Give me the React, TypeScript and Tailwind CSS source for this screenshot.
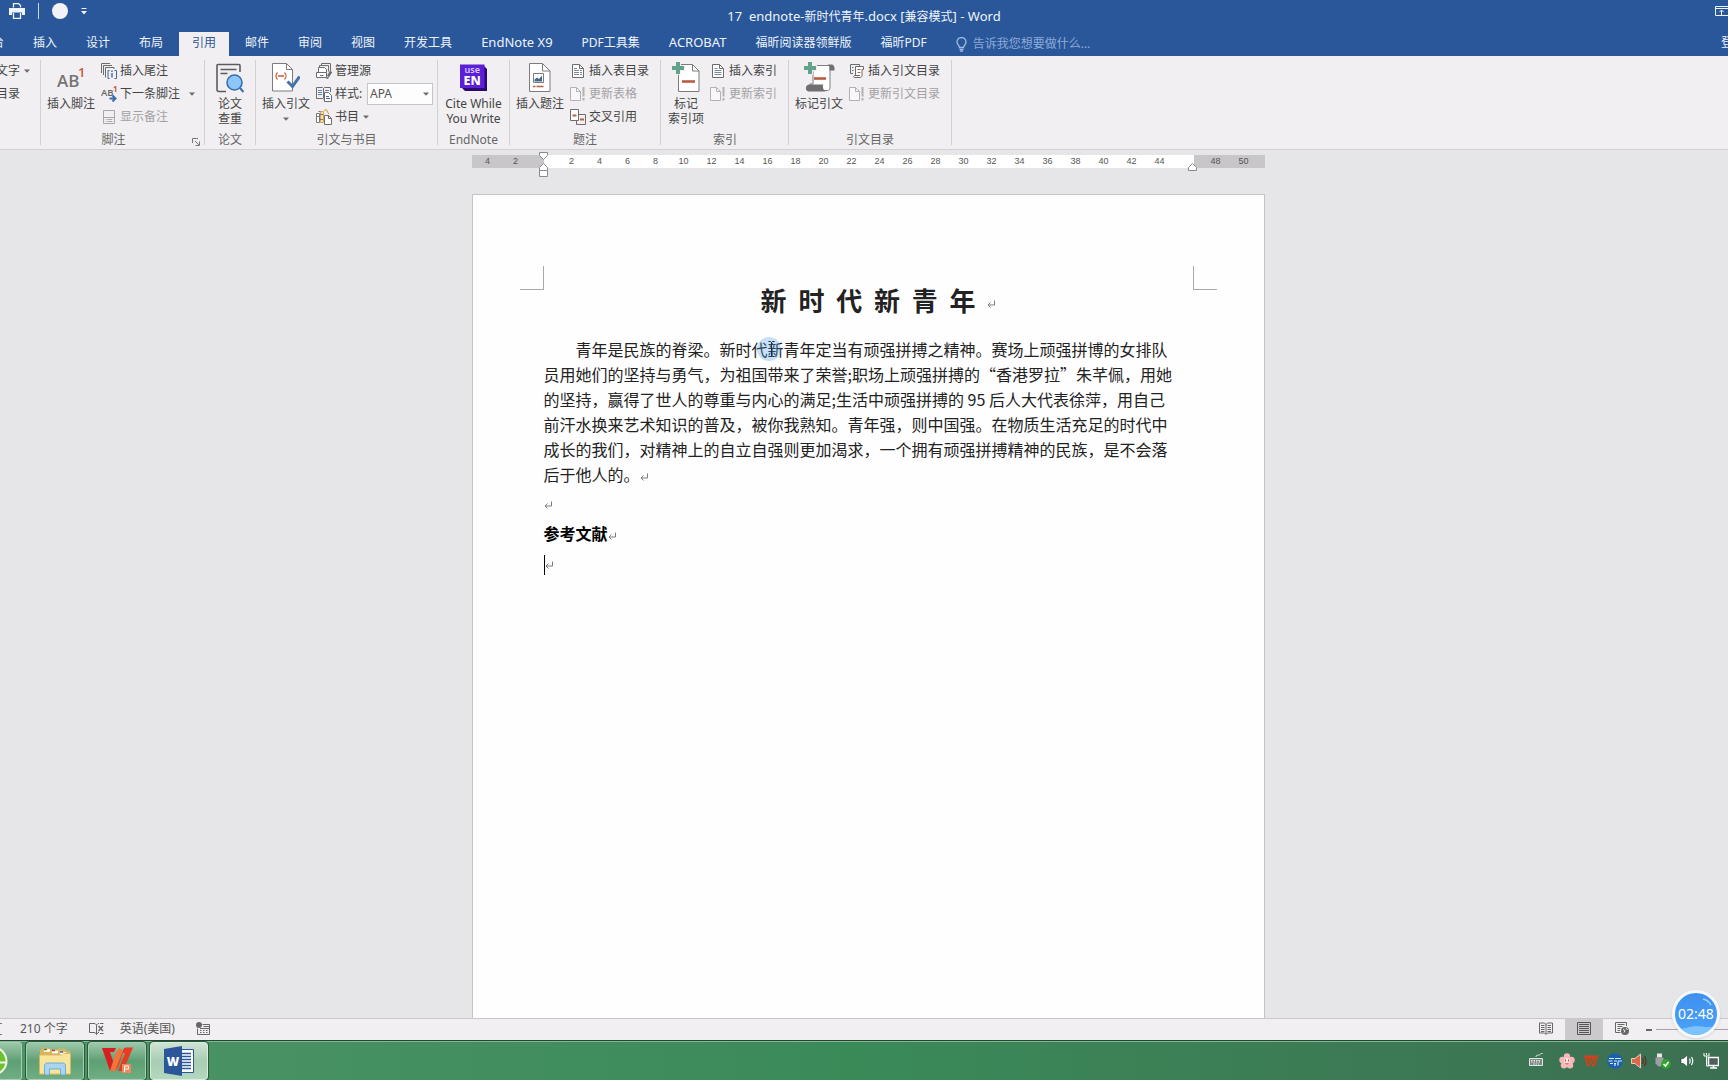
import { useState, type ReactNode } from "react";
import clsx from "clsx";

const TABS = [
  { name: "插入" },
  { name: "设计" },
  { name: "布局" },
  { name: "引用" },
  { name: "邮件" },
  { name: "审阅" },
  { name: "视图" },
  { name: "开发工具" },
  { name: "EndNote X9", latin: true },
  { name: "PDF工具集" },
  { name: "ACROBAT", latin: true },
  { name: "福昕阅读器领鲜版" },
  { name: "福昕PDF" },
];

const RULER_LEFT = [4, 2];
const RULER_MAIN = Array.from({ length: 22 }, (_, i) => (i + 1) * 2);
const RULER_RIGHT = [48, 50];

/* ---------- small shared pieces ---------- */

function Caret({ className }: { className?: string }) {
  return (
    <svg viewBox="0 0 6 4" className={clsx("h-1 w-1.5 shrink-0 fill-[#6b6b6b]", className)}>
      <path d="M0 0.5h6L3 3.8z" />
    </svg>
  );
}

function Divider() {
  return <div className="mt-px mb-1 w-px shrink-0 bg-[#d2d0d3]" />;
}

interface GroupProps {
  label: string;
  className?: string;
  labelClassName?: string;
  launcher?: boolean;
  children: ReactNode;
}

function Group({ label, className, labelClassName, launcher, children }: GroupProps) {
  return (
    <section className={clsx("flex shrink-0 flex-col", className)}>
      <div className="flex h-[69px] gap-1.5">{children}</div>
      <div className="flex h-[21px] items-center">
        <h2 className={clsx("flex-1 pt-0.5 text-center leading-[21px] text-[#666]", labelClassName)}>{label}</h2>
        {launcher && (
          <button aria-label="脚注和尾注" className="mt-1.5 mr-1 h-2 w-2">
            <svg viewBox="0 0 8 8" className="h-2 w-2" fill="none" stroke="#777">
              <path d="M0.5 5V0.5H6M3 3l4 4M7.5 3.5v4h-4" />
            </svg>
          </button>
        )}
      </div>
    </section>
  );
}

interface LargeButtonProps {
  icon: ReactNode;
  lines: string[];
  caret?: boolean;
}

function LargeButton({ icon, lines, caret }: LargeButtonProps) {
  return (
    <button className="flex flex-col items-center">
      <span className="flex h-[37px] items-center">{icon}</span>
      {lines.map((line) => (
        <span key={line} className="leading-[15px] whitespace-nowrap">
          {line}
        </span>
      ))}
      {caret && <Caret className="mt-1.5" />}
    </button>
  );
}

interface SmallButtonProps {
  icon: ReactNode;
  label: string;
  caret?: string;
  disabled?: boolean;
}

function SmallButton({ icon, label, caret, disabled }: SmallButtonProps) {
  return (
    <button disabled={disabled} className="flex h-[23px] items-center gap-[3px] whitespace-nowrap disabled:text-[#a3a1a4]">
      {icon}
      <span>{label}</span>
      {caret && <Caret className={caret} />}
    </button>
  );
}

/* ---------- ribbon icons ---------- */

function FootnoteIcon() {
  return (
    <svg viewBox="0 0 28 24" className="h-6 w-7 font-['Open_Sans','Noto_Sans',sans-serif]">
      <text x="0" y="21" fontSize="17" fontWeight="600" fill="#757575">AB</text>
      <text x="21" y="11" fontSize="13" fontWeight="600" fill="#d0563c">1</text>
    </svg>
  );
}

function EndnoteIcon() {
  return (
    <svg viewBox="0 0 16 16" className="h-4 w-4" fill="none">
      <path d="M0.5 10V0.5H9M2.5 12V2.5H11M4.5 14.5V4.5H13V6" stroke="#6d6d6d" />
      <path d="M8.5 7.5H7v8h1.5M13.5 7.5H15.5v8h-2" stroke="#44699f" />
      <path d="M11 7.500v1.500M11 10v4.500" stroke="#44699f" strokeWidth="1.400" />
    </svg>
  );
}

function NextFootnoteIcon() {
  return (
    <svg viewBox="0 0 16 16" className="h-4 w-4 font-['Open_Sans','Noto_Sans',sans-serif]">
      <text x="0" y="10" fontSize="9.500" fontWeight="600" fill="#666">AB</text>
      <text x="12" y="6" fontSize="8" fontWeight="700" fill="#d0563c">1</text>
      <path d="M8.500 12.500h5M11.500 9.500l3 3-3 3" stroke="#3b6fb0" strokeWidth="2" fill="none" />
    </svg>
  );
}

function ShowNotesIcon() {
  return (
    <svg viewBox="0 0 16 16" className="h-4 w-4" fill="none" stroke="#a9a7aa">
      <path d="M2.500 1.500h11v13h-11z" />
      <path d="M2.500 8.500h11" />
      <path d="M4.500 10.500h1M6.500 10.500h5M4.500 12.500h1M6.500 12.500h5" />
    </svg>
  );
}

function PaperCheckIcon() {
  return (
    <svg viewBox="0 0 28 30" className="h-[30px] w-7" fill="none">
      <path d="M10 28.500H3a2 2 0 0 1-2-2V2.500a1 1 0 0 1 1-1h21a1 1 0 0 1 1 1V9" stroke="#5c5c60" strokeWidth="1.600" />
      <path d="M4.500 6.500h16M4.500 10.500h7" stroke="#5c5c60" strokeWidth="1.600" />
      <circle cx="18.500" cy="19.500" r="7.500" fill="#8cc6fb" stroke="#3a6fae" strokeWidth="1.600" />
      <path d="M24 25l3.500 4" stroke="#3a6fae" strokeWidth="2" />
    </svg>
  );
}

function CitationIcon() {
  return (
    <svg viewBox="0 0 28 29" className="h-[29px] w-7" fill="none">
      <path d="M0.500 0.500h14l6 6v21.500h-20z" fill="#fff" stroke="#7c7c7c" />
      <path d="M14.500 0.500v6h6" stroke="#7c7c7c" />
      <path d="M5.500 9.500c-2 2-2 5 0 7M12.500 9.500c2 2 2 5 0 7" stroke="#c8643f" strokeWidth="1.300" />
      <path d="M6 13h6" stroke="#c8643f" strokeWidth="1.600" />
      <path d="M15.500 18.500l5 5 7-10" stroke="#4472ad" strokeWidth="3" />
    </svg>
  );
}

function ManageSourcesIcon() {
  return (
    <svg viewBox="0 0 16 16" className="h-4 w-4" fill="none" stroke="#6d6d6d">
      <path d="M5.500 3V0.500h9v8M3.500 5V2.500h9v6" />
      <path d="M2.500 9.500v-5h6l2 2v3" fill="#fff" />
      <path d="M0.500 9.500h10v5h-10z" fill="#fff" />
      <path d="M4 12.500h3.500" />
      <path d="M12 13.500l3-5" strokeWidth="2.500" />
      <path d="M10.500 15.500l2-1" strokeWidth="1.500" />
    </svg>
  );
}

function StyleIcon() {
  return (
    <svg viewBox="0 0 16 16" className="h-4 w-4" fill="none">
      <path d="M7.500 13.500L6.500 12.500H0.500v-11h6l1 1 1-1h6V6M7.500 2.500v10" stroke="#6d6d6d" />
      <path d="M2 4.500h4M2 6.500h4M2 8.500h4M9 4.500h4" stroke="#5d84b8" />
      <path d="M8.500 6.500h4l3 3v6h-7z" fill="#fff" stroke="#6d6d6d" />
      <path d="M10 10.500h3M10 12.500h4" stroke="#44699f" />
    </svg>
  );
}

function BibliographyIcon() {
  return (
    <svg viewBox="0 0 16 16" className="h-4 w-4" fill="none">
      <path d="M0.500 4.500h3v9h-3z" fill="#fff" stroke="#777" />
      <path d="M4.500 2.500h3v11h-3z" fill="#f3dcae" stroke="#cfa65c" />
      <path d="M8 1.500l2.500-1 2.500 5" fill="#f3dcae" stroke="#cfa65c" />
      <path d="M4 5.500h3M1 7.500h2M4 10.500h3M2.500 2.500h2" stroke="#777" />
      <path d="M8.500 6.500h4l3 3v6h-7z" fill="#fff" stroke="#6d6d6d" />
      <path d="M12.500 6.500v3h3" stroke="#6d6d6d" />
    </svg>
  );
}

function EndNoteLogo() {
  return (
    <svg viewBox="0 0 28 28" className="h-7 w-7 font-['Noto_Sans',sans-serif]">
      <path d="M24 2l3 3v22H5l-3-3z" fill="#2d0875" />
      <path d="M0 0.500h24.500V24H0z" fill="#5b1fd6" />
      <text x="12.200" y="8.500" fontSize="9" fontWeight="600" fill="#d9c8ff" textAnchor="middle">use</text>
      <text x="12.200" y="20.500" fontSize="12.500" fontWeight="800" fill="#fff" textAnchor="middle">EN</text>
    </svg>
  );
}

function CaptionIcon() {
  return (
    <svg viewBox="0 0 22 29" className="h-[29px] w-[22px]" fill="none">
      <path d="M0.500 0.500h13l7.500 7.500v20.500h-20.500z" fill="#fff" stroke="#7c7c7c" />
      <path d="M13.500 0.500V8H21" stroke="#7c7c7c" />
      <path d="M4.500 10.500h10v9h-10z" stroke="#7c7c7c" />
      <path d="M5.500 18.500v-2l2.500-2 2 1.500 3-3.500v6z" fill="#42688f" />
      <path d="M4 23.500h2.500M7.500 23.500h7" stroke="#b85c42" strokeWidth="1.400" />
    </svg>
  );
}

function TableOfFiguresIcon() {
  return (
    <svg viewBox="0 0 16 16" className="h-4 w-4" fill="none">
      <path d="M2.500 1.500h7l4 4v9h-11z" fill="#fff" stroke="#6d6d6d" />
      <path d="M9.500 1.500v4h4" stroke="#6d6d6d" />
      <path d="M4 5.500h3M4 7.500h5M10 7.500h2M4 9.500h5M10 9.500h2M4 11.500h5M10 11.500h2" stroke="#7b8794" />
    </svg>
  );
}

function UpdateIcon() {
  return (
    <svg viewBox="0 0 16 16" className="h-4 w-4" fill="none" stroke="#b3b1b4">
      <path d="M0.500 1.500h6l4 4v9h-10z" fill="#f8f7f9" />
      <path d="M6.500 1.500v4h4" />
      <path d="M13.500 1v9.500M13.500 12v2.500" strokeWidth="2" />
    </svg>
  );
}

function CrossReferenceIcon() {
  return (
    <svg viewBox="0 0 16 16" className="h-4 w-4" fill="none">
      <path d="M0.500 0.500h8v11h-8z" fill="#fff" stroke="#6d6d6d" />
      <path d="M6.500 11.500v4h9v-10h-7" stroke="#6d6d6d" />
      <path d="M2.500 6.500h4M10 10.500h4" stroke="#b8603c" strokeWidth="2" />
    </svg>
  );
}

function MarkEntryIcon() {
  return (
    <svg viewBox="0 0 28 31" className="h-[31px] w-7" fill="none">
      <path d="M6.500 2.500h14l6.500 6.500v20.500h-20.500z" fill="#fff" stroke="#7c7c7c" />
      <path d="M20.500 2.500V9H27" stroke="#7c7c7c" />
      <path d="M6 0v13M0 6h13" stroke="#f1eff2" strokeWidth="6" />
      <path d="M6 0v12M0 6h12" stroke="#62a28a" strokeWidth="4" />
      <path d="M10 19.500h13" stroke="#b85c42" strokeWidth="2.600" />
    </svg>
  );
}

function IndexIcon() {
  return (
    <svg viewBox="0 0 16 16" className="h-4 w-4" fill="none">
      <path d="M2.500 1.500h7l4 4v9h-11z" fill="#fff" stroke="#6d6d6d" />
      <path d="M9.500 1.500v4h4" stroke="#6d6d6d" />
      <path d="M4.500 5.500h3M4.500 7.500h7M4.500 9.500h7M4.500 11.500h7" stroke="#7b8794" />
    </svg>
  );
}

function MarkCitationIcon() {
  return (
    <svg viewBox="0 0 31 31" className="h-[31px] w-[31px]" fill="none">
      <path d="M9 3.500h17v22c0 2-1 3-2.500 3H6V22h3z" fill="#fff" stroke="#7c7c7c" />
      <path d="M24 2.500h3.500c2 0 3 2 3 4v2h-5V4.500z" fill="#6f6f6f" />
      <path d="M5 22.500h14.500c-1.500 2 0 6.500 2.500 7H4.500C1 29 1 23 5 22.500z" fill="#6f6f6f" />
      <path d="M6 0v13M0 6h13" stroke="#f1eff2" strokeWidth="6" />
      <path d="M6 0v12M0 6h12" stroke="#62a28a" strokeWidth="4" />
      <path d="M10 16.500h12" stroke="#b85c42" strokeWidth="2.600" />
    </svg>
  );
}

function AuthoritiesIcon() {
  return (
    <svg viewBox="0 0 16 16" className="h-4 w-4" fill="none" stroke="#6d6d6d">
      <path d="M4 10.500H1.500v-9h9V3" />
      <path d="M3 4.500h1.500M3 7.500h1.500" />
      <path d="M6.500 12v-8.500h8v3h-1.500v6c0 1-1 2-2 2H5.500c-1 0-1-2 0-2H11" fill="#fff" />
      <path d="M8.500 6.500h3M8.500 9.500h3" stroke="#b8603c" />
    </svg>
  );
}

/* ---------- page pieces ---------- */

function ReturnMark({ className }: { className?: string }) {
  return (
    <svg viewBox="0 0 8 8" className={clsx("inline-block h-2 w-2", className)} fill="none" stroke="#7d7d7d">
      <path d="M7.500 0.500v4.500H1.500M3.500 2.500L1 5l2.500 2.500" />
    </svg>
  );
}

function Ruler() {
  return (
    <div className="relative mt-[5px] flex h-[13px] w-[793px] shrink-0 font-['Liberation_Sans',sans-serif] text-[9px] leading-[13px] text-[#555]">
      <div className="flex w-[72px] bg-[#c8c6c9] pl-0.5">
        {RULER_LEFT.map((n) => (
          <span key={n} className="w-7 text-center">{n}</span>
        ))}
      </div>
      <div className="flex flex-1 bg-white pl-3.5">
        {RULER_MAIN.map((n) => (
          <span key={n} className="w-7 text-center">{n}</span>
        ))}
      </div>
      <div className="flex w-[71px] bg-[#c8c6c9] pl-2">
        {RULER_RIGHT.map((n) => (
          <span key={n} className="w-7 text-center">{n}</span>
        ))}
      </div>
      <svg viewBox="0 0 9 26" className="absolute -top-[3px] left-[67px] h-[26px] w-[9px]" fill="#fff" stroke="#8a8a8a">
        <path d="M0.500 0.500h8v3l-4 4-4-4z" />
        <path d="M4.500 11.500l4 4v3h-8v-3z" />
        <path d="M0.500 18.500h8v6h-8z" />
      </svg>
      <svg viewBox="0 0 9 8" className="absolute top-2 left-[716px] h-2 w-[9px]" fill="#fff" stroke="#8a8a8a">
        <path d="M4.500 0.500l4 4v3h-8v-3z" />
      </svg>
    </div>
  );
}

function DocumentPage() {
  return (
    <article className="mt-[26px] flex w-[793px] flex-1 flex-col border border-b-0 border-[#c4c4c6] bg-[#fefefe] px-[71px] font-['Noto_Sans_CJK_SC',sans-serif] text-base text-[#222]">
      {/* margin corners */}
      <div className="-mx-6 mt-[71px] flex h-6 shrink-0 justify-between">
        <span className="w-6 border-r border-b border-[#a8a8a8]" />
        <span className="w-6 border-b border-l border-[#a8a8a8]" />
      </div>
      <h1 className="-mt-2 pl-5 text-center text-[26px] leading-9 font-bold whitespace-pre">
        {"新  时  代  新  青  年  "}
        <ReturnMark />
      </h1>
      <p className="mt-[19px] pr-[15px] indent-8 leading-[25px]">
        青年是民族的脊梁。新时代
        <span className="relative">
          <span className="absolute top-0 -left-[11px] h-6 w-6 rounded-full bg-[#4a9be8]/30" />
          <svg viewBox="0 0 7 16" className="absolute top-1 left-0 h-4 w-[7px]" fill="none" stroke="#1d2b3a">
            <path d="M0.500 0.500h2l1 1 1-1h2M3.500 1.500v13M0.500 15.500h2l1-1 1 1h2" />
          </svg>
        </span>
        新青年定当有顽强拼搏之精神。赛场上顽强拼博的女排队员用她们的坚持与勇气，为祖国带来了荣誉;职场上顽强拼搏的“香港罗拉”朱芊佩，用她的坚持，赢得了世人的尊重与内心的满足;生活中顽强拼搏的
        95 后人大代表徐萍，用自己前汗水换来艺术知识的普及，被你我熟知。青年强，则中国强。在物质生活充足的时代中成长的我们，对精神上的自立自强则更加渴求，一个拥有顽强拼搏精神的民族，是不会落后于他人的。
        <ReturnMark />
      </p>
      <p className="leading-[30px]">
        <ReturnMark />
      </p>
      <h2 className="leading-8 font-bold text-black">
        参考文献
        <ReturnMark />
      </h2>
      <p className="flex h-[31px] items-center">
        <span className="h-5 w-px bg-black" />
        <ReturnMark />
      </p>
    </article>
  );
}

/* ---------- status bar and taskbar ---------- */

function StatusBar() {
  return (
    <footer className="flex h-[22px] shrink-0 items-center border-t border-[#c9c7ca] bg-[#f1eff2] text-[#555]">
      <div className="flex flex-1 items-center pb-0.5">
        <svg viewBox="0 0 2 12" className="h-3 w-0.5" fill="none" stroke="#777">
          <path d="M2 0.500H0M2 11.500H0" />
        </svg>
        <span className="ml-[18px]">210 个字</span>
        <button aria-label="校对" className="ml-[21px]">
          <svg viewBox="0 0 15 13" className="h-[13px] w-[15px]" fill="none" stroke="#666">
            <path d="M7.500 12.500L6 10.500H0.500v-9H6l1.500 1.500V12.500L9 10.500h1M7.500 3L9 1.500h1" />
            <path d="M9.500 4l4.500 5M14 4L9.500 9" strokeWidth="1.500" />
            <path d="M11 1.500h3.500M11 11.500h3.500" />
          </svg>
        </button>
        <button className="ml-4">英语(美国)</button>
        <button aria-label="宏" className="ml-[21px]">
          <svg viewBox="0 0 14 13" className="h-[13px] w-3.5" fill="none" stroke="#666">
            <path d="M6.500 2.500h7v10h-12V6.500M4 6.500h9M7.500 4.500H13" />
            <path d="M4 8.500h1.500M7 8.500h1.500M10 8.500h1.500M4 10.500h1.500M7 10.500h1.500M10 10.500h1.500" />
            <circle cx="3" cy="3" r="3" fill="#666" stroke="none" />
          </svg>
        </button>
      </div>
      <button aria-label="阅读视图" className="flex h-full w-[38px] items-center justify-center pb-0.5">
        <svg viewBox="0 0 14 13" className="h-[13px] w-3.5" fill="none" stroke="#666">
          <path d="M7 12.500L5.500 11H0.500V1h5L7 2.500 8.500 1h5v10h-5zM7 2v10" />
          <path d="M2 3.500h3.500M2 5.500h3.500M2 7.500h3.500M8.500 3.500H12M8.500 5.500H12M8.500 7.500H12M2 9.500h3.500M8.500 9.500H12" />
        </svg>
      </button>
      <button aria-label="页面视图" className="flex h-full w-[38px] items-center justify-center bg-[#cbc9cc] pb-0.5">
        <svg viewBox="0 0 14 13" className="h-[13px] w-3.5" fill="none" stroke="#555">
          <path d="M0.500 0.500h13v12H0.500z" />
          <path d="M2 2.500h10M2 4.500h10M2 6.500h10M2 8.500h10M2 10.500h10" />
        </svg>
      </button>
      <button aria-label="Web 版式视图" className="flex h-full w-[38px] items-center justify-center pb-0.5">
        <svg viewBox="0 0 14 13" className="h-[13px] w-3.5" fill="none" stroke="#666">
          <path d="M5.500 10.500h-5v-10h11V4M2.500 2.500h7M2.500 4.500h5M2.500 6.500h3M2.500 8.500h2.500" />
          <circle cx="10" cy="9" r="4" fill="#666" stroke="none" />
          <path d="M8 7.500l2 1-1 2M11 6l1.500 2" stroke="#eee" />
        </svg>
      </button>
      <button aria-label="缩小" className="ml-[5px] h-0.5 w-1.5 bg-[#666]" />
      <div className="ml-1 flex w-[72px] items-center overflow-hidden">
        <input
          type="range"
          aria-label="显示比例"
          defaultValue={50}
          className="h-px w-40 shrink-0 appearance-none bg-[#a5a3a6]"
        />
      </div>
    </footer>
  );
}

interface TaskButtonProps {
  label: string;
  active?: boolean;
  children: ReactNode;
}

function TaskButton({ label, active, children }: TaskButtonProps) {
  return (
    <button
      aria-label={label}
      className={clsx(
        "flex h-[38px] w-[58px] items-center justify-center rounded-[3px] border bg-linear-to-b outline outline-[#2a5a3c]",
        active
          ? "border-[#dcebdf] from-[#cfe3d4] via-[#a9cdb3] to-[#b4d8bd]"
          : "border-[#a9cdb4] from-[#9cc8a9] via-[#5f9f74] to-[#6fae83]",
      )}
    >
      {children}
    </button>
  );
}

function Taskbar() {
  return (
    <div className="flex h-10 shrink-0 items-center gap-1 border-t border-[#1f4a30] bg-linear-to-r from-[#4d9467] via-[#3a8a58] to-[#3c6f52] shadow-[inset_0_1px_0_#86b596]">
      <button
        aria-label="浏览器"
        className="flex h-[38px] w-[22px] items-center overflow-hidden rounded-r-[3px] border border-l-0 border-[#a9cdb4] bg-linear-to-b from-[#9cc8a9] via-[#5f9f74] to-[#6fae83]"
      >
        <svg viewBox="0 0 8 28" className="h-7 w-2">
          <circle cx="-7" cy="14" r="13.500" fill="#6cc22e" stroke="#eef8e4" strokeWidth="2" />
          <path d="M-7 15.500H7" stroke="#eef8e4" strokeWidth="2" />
        </svg>
      </button>
      <TaskButton label="资源管理器">
        <svg viewBox="0 0 32 30" className="h-[30px] w-8">
          <path d="M2 3.500l1.500-2h6l1.500 2h8l1-1h6l1 2 4 1v23H1V5z" fill="#d9b65e" />
          <path d="M5 4.500h6M13 6h6M21 7.500h6" stroke="#fff" strokeWidth="2.500" />
          <path d="M5 3.500h3" stroke="#3f8a45" strokeWidth="1.500" />
          <path d="M13 4.500h3" stroke="#c33" strokeWidth="1.500" />
          <path d="M21 6h3" stroke="#3a6fb0" strokeWidth="1.500" />
          <path d="M0.500 9h22l2-1.500h7v20.500H0.500z" fill="#f8e59c" stroke="#d8b559" strokeWidth="0.800" />
          <path d="M5.500 29V20c0-2 1-3 3-3h15c2 0 3 1 3 3v9h-5v-6h-11v6z" fill="#a9d5f2" stroke="#5b9fd0" strokeWidth="0.800" />
        </svg>
      </TaskButton>
      <TaskButton label="WPS">
        <svg viewBox="0 0 32 28" className="h-7 w-8">
          <path d="M1 1h14l-2 4H9l4 12-4 7z" fill="#d81f1f" />
          <path d="M14 22l8-19c1-2 2-2.500 4-2.500h6L22 24h-5l7-18h-2l-5 14c-2 4-5 5-7 4z" fill="#ea3a22" />
          <path d="M14.500 6.500l4-5.500 3.500 3-8 20-5 0z" fill="#f4733a" />
          <path d="M21 17h9v9h-9z" fill="#f08a5c" />
          <path d="M23.500 25v-6h4v3h-4" stroke="#fff" fill="none" />
        </svg>
      </TaskButton>
      <TaskButton label="Word" active>
        <svg viewBox="0 0 30 30" className="h-[30px] w-[30px] font-['Open_Sans',sans-serif]">
          <path d="M16 3.500h13.500v23H16z" fill="#fff" stroke="#2b579a" />
          <path d="M18 7.500h9M18 10.500h9M18 13.500h9M18 16.500h9M18 19.500h9M18 22.500h9" stroke="#2b579a" strokeWidth="1.300" />
          <path d="M0 3l18-3v30L0 27z" fill="#2b579a" />
          <text x="9" y="19.500" fontSize="12" fontWeight="800" fill="#fff" textAnchor="middle">W</text>
        </svg>
      </TaskButton>

      <div className="ml-auto flex items-center gap-2 pr-[9px]">
        <svg viewBox="0 0 16 16" className="mr-[7px] h-4 w-4" fill="none" stroke="#e4e4e4">
          <path d="M8 4c0-3 3-1 4-2.500 0.500-1 1.500-1 3-1.500" />
          <path d="M1.500 5.500h13v7h-13z" fill="#7c8a80" />
          <path d="M3 7.500h10M3 9h10M5 11h6" strokeDasharray="1.500 1" />
        </svg>
        <svg viewBox="0 0 16 16" className="h-4 w-4" fill="#f6b9b9">
          <circle cx="8" cy="3.500" r="3.200" />
          <circle cx="12.500" cy="7" r="3.200" />
          <circle cx="11" cy="12.300" r="3.200" />
          <circle cx="5" cy="12.300" r="3.200" />
          <circle cx="3.500" cy="7" r="3.200" />
          <circle cx="8" cy="8" r="3" fill="#fbe3e0" />
          <path d="M6.500 6.500v2M9.500 6.500v2M6.500 10.500q1.500 1 3 0" stroke="#c8474a" fill="none" />
        </svg>
        <svg viewBox="0 0 16 16" className="h-4 w-4" fill="none">
          <path d="M0.500 2.500h15l-4 11h-2l-1.500-4-1.500 4h-2z" fill="#d2401f" />
          <path d="M4 4l1.800 7L8 5l2.200 6L12 4" stroke="#5b6a35" />
        </svg>
        <svg viewBox="0 0 16 16" className="h-4 w-4" fill="none">
          <circle cx="8" cy="8" r="7.800" fill="#1c5fae" />
          <path d="M2 5.500h5M8 5.500h6M1.500 8h4M7 8h3M11 8h4M3 10.500h3M7 10.500h2M8 13v-2M11 12.500v-4" stroke="#d9ebfb" strokeWidth="1.200" />
        </svg>
        <svg viewBox="0 0 16 16" className="h-4 w-4" fill="none">
          <path d="M0.500 5.500h3.500L9.500 1v14L4 10.500H0.500z" fill="#d9694a" stroke="#f0cbbb" />
          <path d="M11.500 5q1.500 3 0 6M13.500 3q3 5 0 10" stroke="#5a3226" strokeWidth="1.300" />
        </svg>
        <svg viewBox="0 0 16 16" className="h-4 w-4" fill="none">
          <path d="M2 0.500h5v4H2z" fill="#e8e8e8" />
          <path d="M0.500 4.500h8v6l-3 3h-2l-3-3z" fill="#9b9fa1" />
          <circle cx="11" cy="11" r="4.800" fill="#2ca52c" />
          <path d="M8.500 11l2 2 3-4" stroke="#fff" strokeWidth="1.500" />
        </svg>
        <svg viewBox="0 0 16 16" className="h-4 w-4" fill="none">
          <path d="M2 5.500h2.500L8.500 2v12l-4-3.500H2z" fill="#fff" stroke="#243a2d" strokeWidth="0.600" />
          <path d="M10.500 5.500q1.500 2.500 0 5M12.500 4q2.500 4 0 8" stroke="#fff" strokeWidth="1.200" />
        </svg>
        <svg viewBox="0 0 16 16" className="h-4 w-4" fill="none" stroke="#fff">
          <path d="M5.500 4.500h10v8h-10z" fill="#4d5f57" strokeWidth="1.500" />
          <path d="M10.500 12.500v2M7 15h7" strokeWidth="1.500" />
          <path d="M1 0v3h5V0M3.500 0v2M3.500 3v10h2" />
        </svg>
      </div>
    </div>
  );
}

export default function App() {
  const [tab, setTab] = useState("引用");

  return (
    <div
      lang="zh-CN"
      className="relative flex h-screen flex-col overflow-hidden bg-[#e6e6e9] font-['Noto_Sans','Noto_Sans_CJK_SC',sans-serif] text-xs text-[#444]"
    >
      <header className="shrink-0 bg-[#2a579a] text-[#eef4fb]">
        <div className="relative flex h-8 items-start pt-[3px] pl-[9px]">
          <button aria-label="打印">
            <svg viewBox="0 0 16 16" className="h-4 w-4" fill="none" stroke="#eef4fb">
              <path d="M4.500 4.500v-4h5l2 2v2" strokeWidth="1.300" />
              <path d="M0 5h16v7h-3V9.500H3V12H0z" fill="#eef4fb" stroke="none" />
              <path d="M4.500 10v5.500h7V10" strokeWidth="1.300" />
            </svg>
          </button>
          <span className="ml-[13px] h-4 w-px bg-[#cbd9ec]" />
          <button aria-label="录制" className="ml-[13px] h-4 w-4 rounded-full bg-[#f3f2f7]" />
          <button aria-label="自定义快速访问工具栏" className="mt-[5px] ml-[13px]">
            <svg viewBox="0 0 6 7" className="h-[7px] w-1.5">
              <path d="M0.500 0h5v1h-5zM0 3h6L3 6.500z" fill="#eef4fb" />
            </svg>
          </button>
          <p className="absolute inset-x-0 top-2 text-center text-[13px] leading-4 whitespace-pre">
            {"17  endnote-"}
            <span className="text-xs">新时代青年</span>
            {".docx ["}
            <span className="text-xs">兼容模式</span>
            {"] - Word"}
          </p>
          <button aria-label="功能区显示选项" className="ml-auto w-[13px] overflow-hidden pt-[3px]">
            <svg viewBox="0 0 14 10" className="h-2.5 w-3.5" fill="none" stroke="#eef4fb">
              <path d="M0.500 0.500h14v9h-14zM0 2.500h14M6.500 9V4.500M4.500 6l2-2 2 2" />
            </svg>
          </button>
        </div>
        <div className="flex h-6 overflow-hidden">
          <button className="-ml-2 w-3 shrink-0 pb-0.5">台</button>
          <nav className="ml-4 flex gap-[3px]">
            {TABS.map(({ name, latin }) => (
              <button
                key={name}
                onClick={() => setTab(name)}
                className={clsx(
                  "px-[13px] pb-0.5 whitespace-nowrap",
                  latin && "text-[13px]",
                  name === tab && "bg-[#f1eff2] text-[#2b579a]",
                )}
              >
                {name}
              </button>
            ))}
          </nav>
          <label className="ml-4 flex items-center gap-1.5">
            <svg viewBox="0 0 11 15" className="h-[15px] w-[11px]" fill="none" stroke="#9fbce3">
              <path d="M3.500 10.500c0-2-2.500-3-2.500-5.500a4.500 4.500 0 0 1 9 0c0 2.500-2.500 3.500-2.500 5.500z" strokeWidth="1.300" />
              <path d="M3.500 12.500h4M4 14.200h3" strokeWidth="1.300" />
            </svg>
            <input
              aria-label="告诉我您想要做什么"
              placeholder="告诉我您想要做什么..."
              className="w-40 bg-transparent outline-none placeholder:text-[#8cabd8]"
            />
          </label>
          <button className="ml-auto w-[7px] overflow-hidden pb-0.5 text-left whitespace-nowrap">登录</button>
        </div>
      </header>

      <div className="flex shrink-0 overflow-hidden border-b border-[#d3d1d4] bg-[#f1eff2] pt-[3px]">
        <div className="flex h-[90px] w-10 shrink-0 flex-col overflow-hidden">
          <button className="-ml-1 flex h-[23px] items-center gap-1 whitespace-nowrap">
            文字
            <Caret />
          </button>
          <button className="-ml-1 flex h-[23px] items-center whitespace-nowrap">目录</button>
        </div>
        <Divider />
        <Group label="脚注" className="w-[163px] pl-1.5" labelClassName="pr-3" launcher>
          <LargeButton icon={<FootnoteIcon />} lines={["插入脚注"]} />
          <div>
            <SmallButton icon={<EndnoteIcon />} label="插入尾注" />
            <SmallButton icon={<NextFootnoteIcon />} label="下一条脚注" caret="ml-1.5" />
            <SmallButton icon={<ShowNotesIcon />} label="显示备注" disabled />
          </div>
        </Group>
        <Divider />
        <Group label="论文" className="w-[50px]">
          <div className="flex flex-1 justify-center">
            <LargeButton icon={<PaperCheckIcon />} lines={["论文", "查重"]} />
          </div>
        </Group>
        <Divider />
        <Group label="引文与书目" className="w-[181px] pl-1.5" labelClassName="pr-1.5">
          <LargeButton icon={<CitationIcon />} lines={["插入引文"]} caret />
          <div>
            <SmallButton icon={<ManageSourcesIcon />} label="管理源" />
            <div className="flex h-[23px] items-center gap-[3px]">
              <StyleIcon />
              <label htmlFor="citation-style" className="w-[29px]">样式:</label>
              <span className="relative flex items-center">
                <select
                  id="citation-style"
                  className="h-[22px] w-[66px] appearance-none border border-[#c6c4c8] bg-[#fdfdfd] pl-0.5 text-[#555]"
                >
                  <option>APA</option>
                </select>
                <Caret className="pointer-events-none absolute right-1" />
              </span>
            </div>
            <SmallButton icon={<BibliographyIcon />} label="书目" caret="ml-px" />
          </div>
        </Group>
        <Divider />
        <Group label="EndNote" className="w-[71px]">
          <div className="flex flex-1 justify-center">
            <LargeButton icon={<EndNoteLogo />} lines={["Cite While", "You Write"]} />
          </div>
        </Group>
        <Divider />
        <Group label="题注" className="w-[150px] pl-1.5" labelClassName="pr-1.5">
          <LargeButton icon={<CaptionIcon />} lines={["插入题注"]} />
          <div>
            <SmallButton icon={<TableOfFiguresIcon />} label="插入表目录" />
            <SmallButton icon={<UpdateIcon />} label="更新表格" disabled />
            <SmallButton icon={<CrossReferenceIcon />} label="交叉引用" />
          </div>
        </Group>
        <Divider />
        <Group label="索引" className="w-[127px] pl-[7px]" labelClassName="pr-1.5">
          <LargeButton icon={<MarkEntryIcon />} lines={["标记", "索引项"]} />
          <div>
            <SmallButton icon={<IndexIcon />} label="插入索引" />
            <SmallButton icon={<UpdateIcon />} label="更新索引" disabled />
          </div>
        </Group>
        <Divider />
        <Group label="引文目录" className="w-[162px] pl-1.5" labelClassName="pr-1.5">
          <LargeButton icon={<MarkCitationIcon />} lines={["标记引文"]} />
          <div>
            <SmallButton icon={<AuthoritiesIcon />} label="插入引文目录" />
            <SmallButton icon={<UpdateIcon />} label="更新引文目录" disabled />
          </div>
        </Group>
        <Divider />
      </div>

      <main className="flex min-h-0 flex-1 flex-col items-center overflow-hidden pl-2">
        <Ruler />
        <DocumentPage />
      </main>

      <StatusBar />
      <Taskbar />

      {/* floating recording timer */}
      <div className="absolute right-2 bottom-[42px] flex h-12 w-12 items-center justify-center overflow-hidden rounded-full border-[3px] border-[#f3f9ff] bg-linear-to-b from-[#3f8ff0] to-[#4aa3f7] shadow">
        <svg viewBox="0 0 42 42" className="absolute inset-0 h-full w-full" fill="none">
          <path d="M0 34c8 4 14-1 21-1s13 3 21-1v10H0z" fill="#7cc3fb" />
          <path d="M28 6q5 1 8 6" stroke="#9fd0fb" strokeWidth="1.500" />
        </svg>
        <span className="relative text-sm text-white">02:48</span>
      </div>
    </div>
  );
}
